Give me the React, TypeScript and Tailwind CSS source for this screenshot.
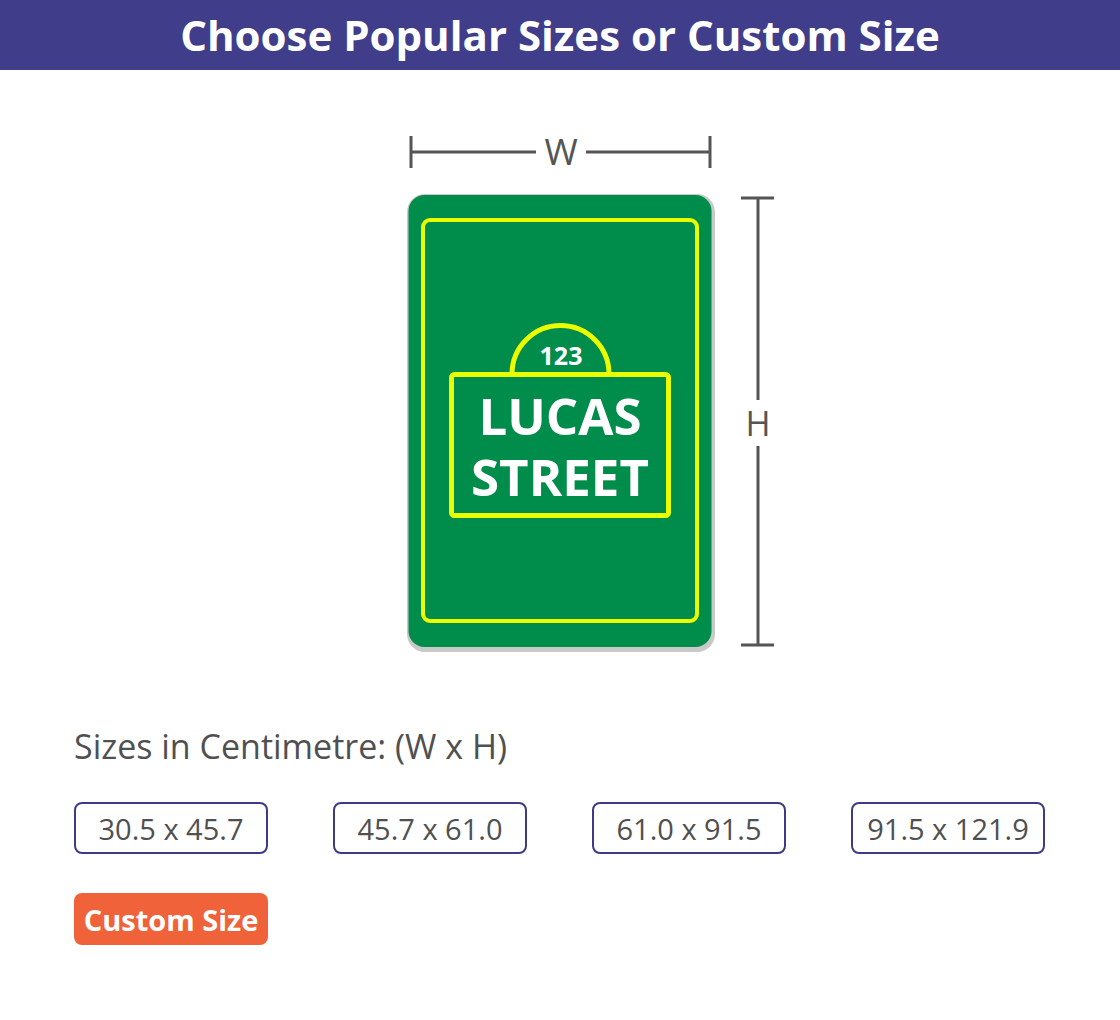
import React from 'react';

const sizes = ['30.5 x 45.7', '45.7 x 61.0', '61.0 x 91.5', '91.5 x 121.9'];

const SignDiagram: React.FC = () => (
  <svg width="440" height="540" viewBox="340 120 440 540" className="block">
    {/* width marker */}
    <g stroke="#555555" strokeWidth="3">
      <line x1="411" y1="136" x2="411" y2="168" />
      <line x1="710" y1="136" x2="710" y2="168" />
      <line x1="411" y1="152" x2="536" y2="152" />
      <line x1="586" y1="152" x2="710" y2="152" />
    </g>
    <text x="561" y="165" textAnchor="middle" fontSize="36" fill="#555555" fontFamily="'Open Sans', sans-serif">
      W
    </text>

    {/* height marker */}
    <g stroke="#555555" strokeWidth="3">
      <line x1="741" y1="198" x2="774" y2="198" />
      <line x1="741" y1="645" x2="774" y2="645" />
      <line x1="758" y1="198" x2="758" y2="400" />
      <line x1="758" y1="446" x2="758" y2="645" />
    </g>
    <text x="758" y="436" textAnchor="middle" fontSize="34" fill="#555555" fontFamily="'Open Sans', sans-serif">
      H
    </text>

    {/* sign */}
    <rect x="407" y="194" width="308" height="458" rx="18" fill="#c9c9c9" />
    <rect x="408.5" y="195" width="303" height="452" rx="16" fill="#008c4a" />
    <rect x="423" y="220" width="274" height="401" rx="7" fill="none" stroke="#eaff00" strokeWidth="4" />

    <path d="M512 374 A48.5 48.5 0 0 1 609 374" fill="none" stroke="#eaff00" strokeWidth="5" />
    <rect x="451.5" y="374.5" width="217" height="141" rx="3" fill="none" stroke="#eaff00" strokeWidth="5" />

    <g fill="#ffffff" fontFamily="'Open Sans', sans-serif" fontWeight="700" textAnchor="middle">
      <text x="561" y="365" fontSize="25">123</text>
      <text x="560" y="435" fontSize="51">LUCAS</text>
      <text x="560" y="496" fontSize="51">STREET</text>
    </g>
  </svg>
);

const App: React.FC = () => {
  return (
    <div className="w-[1120px] min-h-[1020px] bg-white" style={{ fontFamily: "'Open Sans', sans-serif" }}>
      <div className="h-[70px] bg-[#403d8a] flex items-center justify-center">
        <h1 className="text-[42px] font-bold text-white leading-none">
          Choose Popular Sizes or Custom Size
        </h1>
      </div>

      <div className="flex justify-center pt-[50px]">
        <SignDiagram />
      </div>

      <div className="px-[74px] pt-[69px]">
        <p className="text-[34px] text-[#505050] leading-none">Sizes in Centimetre: (W x H)</p>

        <div className="mt-[39px] flex gap-[65px]">
          {sizes.map(size => (
            <button
              key={size}
              type="button"
              className="w-[194px] h-[52px] rounded-[8px] border-2 border-[#3e3b86] bg-white text-[29px] text-[#505050] flex items-center justify-center leading-none"
            >
              {size}
            </button>
          ))}
        </div>

        <button
          type="button"
          className="mt-[39px] w-[194px] h-[52px] rounded-[8px] bg-[#f0623a] text-[29px] font-bold text-white flex items-center justify-center leading-none"
        >
          Custom Size
        </button>
      </div>
    </div>
  );
};

export default App;
